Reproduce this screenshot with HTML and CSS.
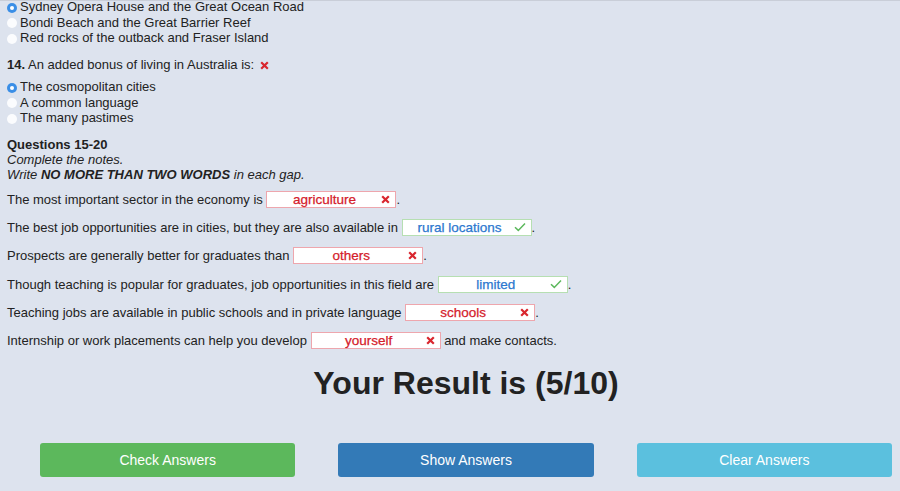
FILE: index.html
```html
<!DOCTYPE html>
<html>
<head>
<meta charset="utf-8">
<link rel="stylesheet" href="styles.css">
</head>
<body>
<div class="page">
  <div class="quiz">
    <ul class="options first">
      <li><span class="radio checked"></span>Sydney Opera House and the Great Ocean Road</li>
      <li><span class="radio"></span>Bondi Beach and the Great Barrier Reef</li>
      <li><span class="radio"></span>Red rocks of the outback and Fraser Island</li>
    </ul>
    <p class="question"><b>14.</b> An added bonus of living in Australia is: <span class="mark"><svg width="9" height="9" viewBox="0 0 9 9"><path d="M1.2 1.2 L7.8 7.8 M7.8 1.2 L1.2 7.8" stroke="#d9262e" stroke-width="2.2" stroke-linecap="butt"/></svg></span></p>
    <ul class="options">
      <li><span class="radio checked"></span>The cosmopolitan cities</li>
      <li><span class="radio"></span>A common language</li>
      <li><span class="radio"></span>The many pastimes</li>
    </ul>
    <div class="section">
      <div class="section-title">Questions 15-20</div>
      <div class="section-note"><i>Complete the notes.</i></div>
      <div class="section-note"><i>Write <b>NO MORE THAN TWO WORDS</b> in each gap.</i></div>
    </div>
    <div class="gaps">
      <div class="gap-row">The most important sector in the economy is <span class="answer bad"><span class="val">agriculture</span><span class="icon"><svg width="9" height="9" viewBox="0 0 9 9"><path d="M1.2 1.2 L7.8 7.8 M7.8 1.2 L1.2 7.8" stroke="#d9262e" stroke-width="2.2"/></svg></span></span>.</div>
      <div class="gap-row">The best job opportunities are in cities, but they are also available in <span class="answer good"><span class="val">rural locations</span><span class="icon"><svg width="12" height="10" viewBox="0 0 12 10"><path d="M1 5.2 L4.3 8.4 L11 1.5" fill="none" stroke="#5cb85c" stroke-width="1.5"/></svg></span></span>.</div>
      <div class="gap-row">Prospects are generally better for graduates than <span class="answer bad"><span class="val">others</span><span class="icon"><svg width="9" height="9" viewBox="0 0 9 9"><path d="M1.2 1.2 L7.8 7.8 M7.8 1.2 L1.2 7.8" stroke="#d9262e" stroke-width="2.2"/></svg></span></span>.</div>
      <div class="gap-row">Though teaching is popular for graduates, job opportunities in this field are <span class="answer good"><span class="val">limited</span><span class="icon"><svg width="12" height="10" viewBox="0 0 12 10"><path d="M1 5.2 L4.3 8.4 L11 1.5" fill="none" stroke="#5cb85c" stroke-width="1.5"/></svg></span></span>.</div>
      <div class="gap-row">Teaching jobs are available in public schools and in private language <span class="answer bad"><span class="val">schools</span><span class="icon"><svg width="9" height="9" viewBox="0 0 9 9"><path d="M1.2 1.2 L7.8 7.8 M7.8 1.2 L1.2 7.8" stroke="#d9262e" stroke-width="2.2"/></svg></span></span>.</div>
      <div class="gap-row">Internship or work placements can help you develop <span class="answer bad"><span class="val">yourself</span><span class="icon"><svg width="9" height="9" viewBox="0 0 9 9"><path d="M1.2 1.2 L7.8 7.8 M7.8 1.2 L1.2 7.8" stroke="#d9262e" stroke-width="2.2"/></svg></span></span> and make contacts.</div>
    </div>
  </div>
  <div class="footer">
    <h1 class="result">Your Result is (5/10)</h1>
    <div class="buttons">
      <button class="btn btn-check">Check Answers</button>
      <button class="btn btn-show">Show Answers</button>
      <button class="btn btn-clear">Clear Answers</button>
    </div>
  </div>
</div>
</body>
</html>
```
FILE: styles.css
```css
html, body {
  margin: 0;
  padding: 0;
  background: #dde3ee;
}
body {
  font-family: "Liberation Sans", Arial, sans-serif;
  font-size: 13px;
  color: #222;
  height: 491px;
  overflow: hidden;
  border-top: 1px solid #c9ced8;
  box-sizing: border-box;
}
.page {
  display: flex;
  flex-direction: column;
}
.quiz {
  padding-left: 7px;
}
.options {
  list-style: none;
  margin: 0;
  padding: 0;
  line-height: 15.5px;
}
.options.first {
  margin-top: -2px;
}
.options li {
  display: flex;
  align-items: center;
}
.radio {
  width: 10px;
  height: 10px;
  border-radius: 50%;
  background: #fbfcfe;
  box-sizing: border-box;
  margin-right: 3px;
  flex: none;
  position: relative;
  top: 1px;
}
.radio.checked {
  background: #3a8ee6;
}
.radio.checked::after {
  content: "";
  position: absolute;
  left: 3px;
  top: 3px;
  width: 4px;
  height: 4px;
  border-radius: 50%;
  background: #fff;
}
.question {
  margin: 11px 0 7px;
  line-height: 15.5px;
}
.mark {
  display: inline-block;
  margin-left: 2px;
  vertical-align: -1px;
}
.mark svg {
  display: block;
}
.section {
  margin-top: 11px;
  line-height: 15px;
}
.section-title {
  font-weight: bold;
}
.gaps {
  margin-top: 4px;
}
.gap-row {
  height: 28.2px;
  display: flex;
  align-items: center;
  white-space: pre;
}
.answer {
  display: inline-flex;
  align-items: center;
  width: 130px;
  height: 17px;
  box-sizing: border-box;
  background: #fff;
  font-size: 13.5px;
  position: relative;
  -webkit-text-stroke: 0.25px currentColor;
}
.answer.bad {
  border: 1px solid #eea6ad;
  color: #d4202b;
}
.answer.good {
  border: 1px solid #b6dfb2;
  color: #2c78cf;
}
.answer .val {
  flex: 1;
  text-align: center;
  padding-right: 14px;
}
.answer .icon {
  position: absolute;
  right: 5px;
  top: 3px;
  display: flex;
  align-items: center;
}
.answer.good .icon {
  top: 2px;
}
.footer {
  margin-left: 40px;
  margin-right: 8px;
}
.result {
  margin: 10px 0 0;
  text-align: center;
  font-size: 32px;
  line-height: 37px;
  font-weight: bold;
  color: #222;
}
.buttons {
  display: grid;
  grid-template-columns: 1fr 1fr 1fr;
  column-gap: 43px;
  margin-top: 41px;
}
.btn {
  height: 34px;
  border: none;
  border-radius: 3px;
  color: #fff;
  font-family: "Liberation Sans", Arial, sans-serif;
  font-size: 14px;
  padding: 0;
}
.btn-check { background: #5cb85c; }
.btn-show { background: #337ab7; }
.btn-clear { background: #5bc0de; }
```
